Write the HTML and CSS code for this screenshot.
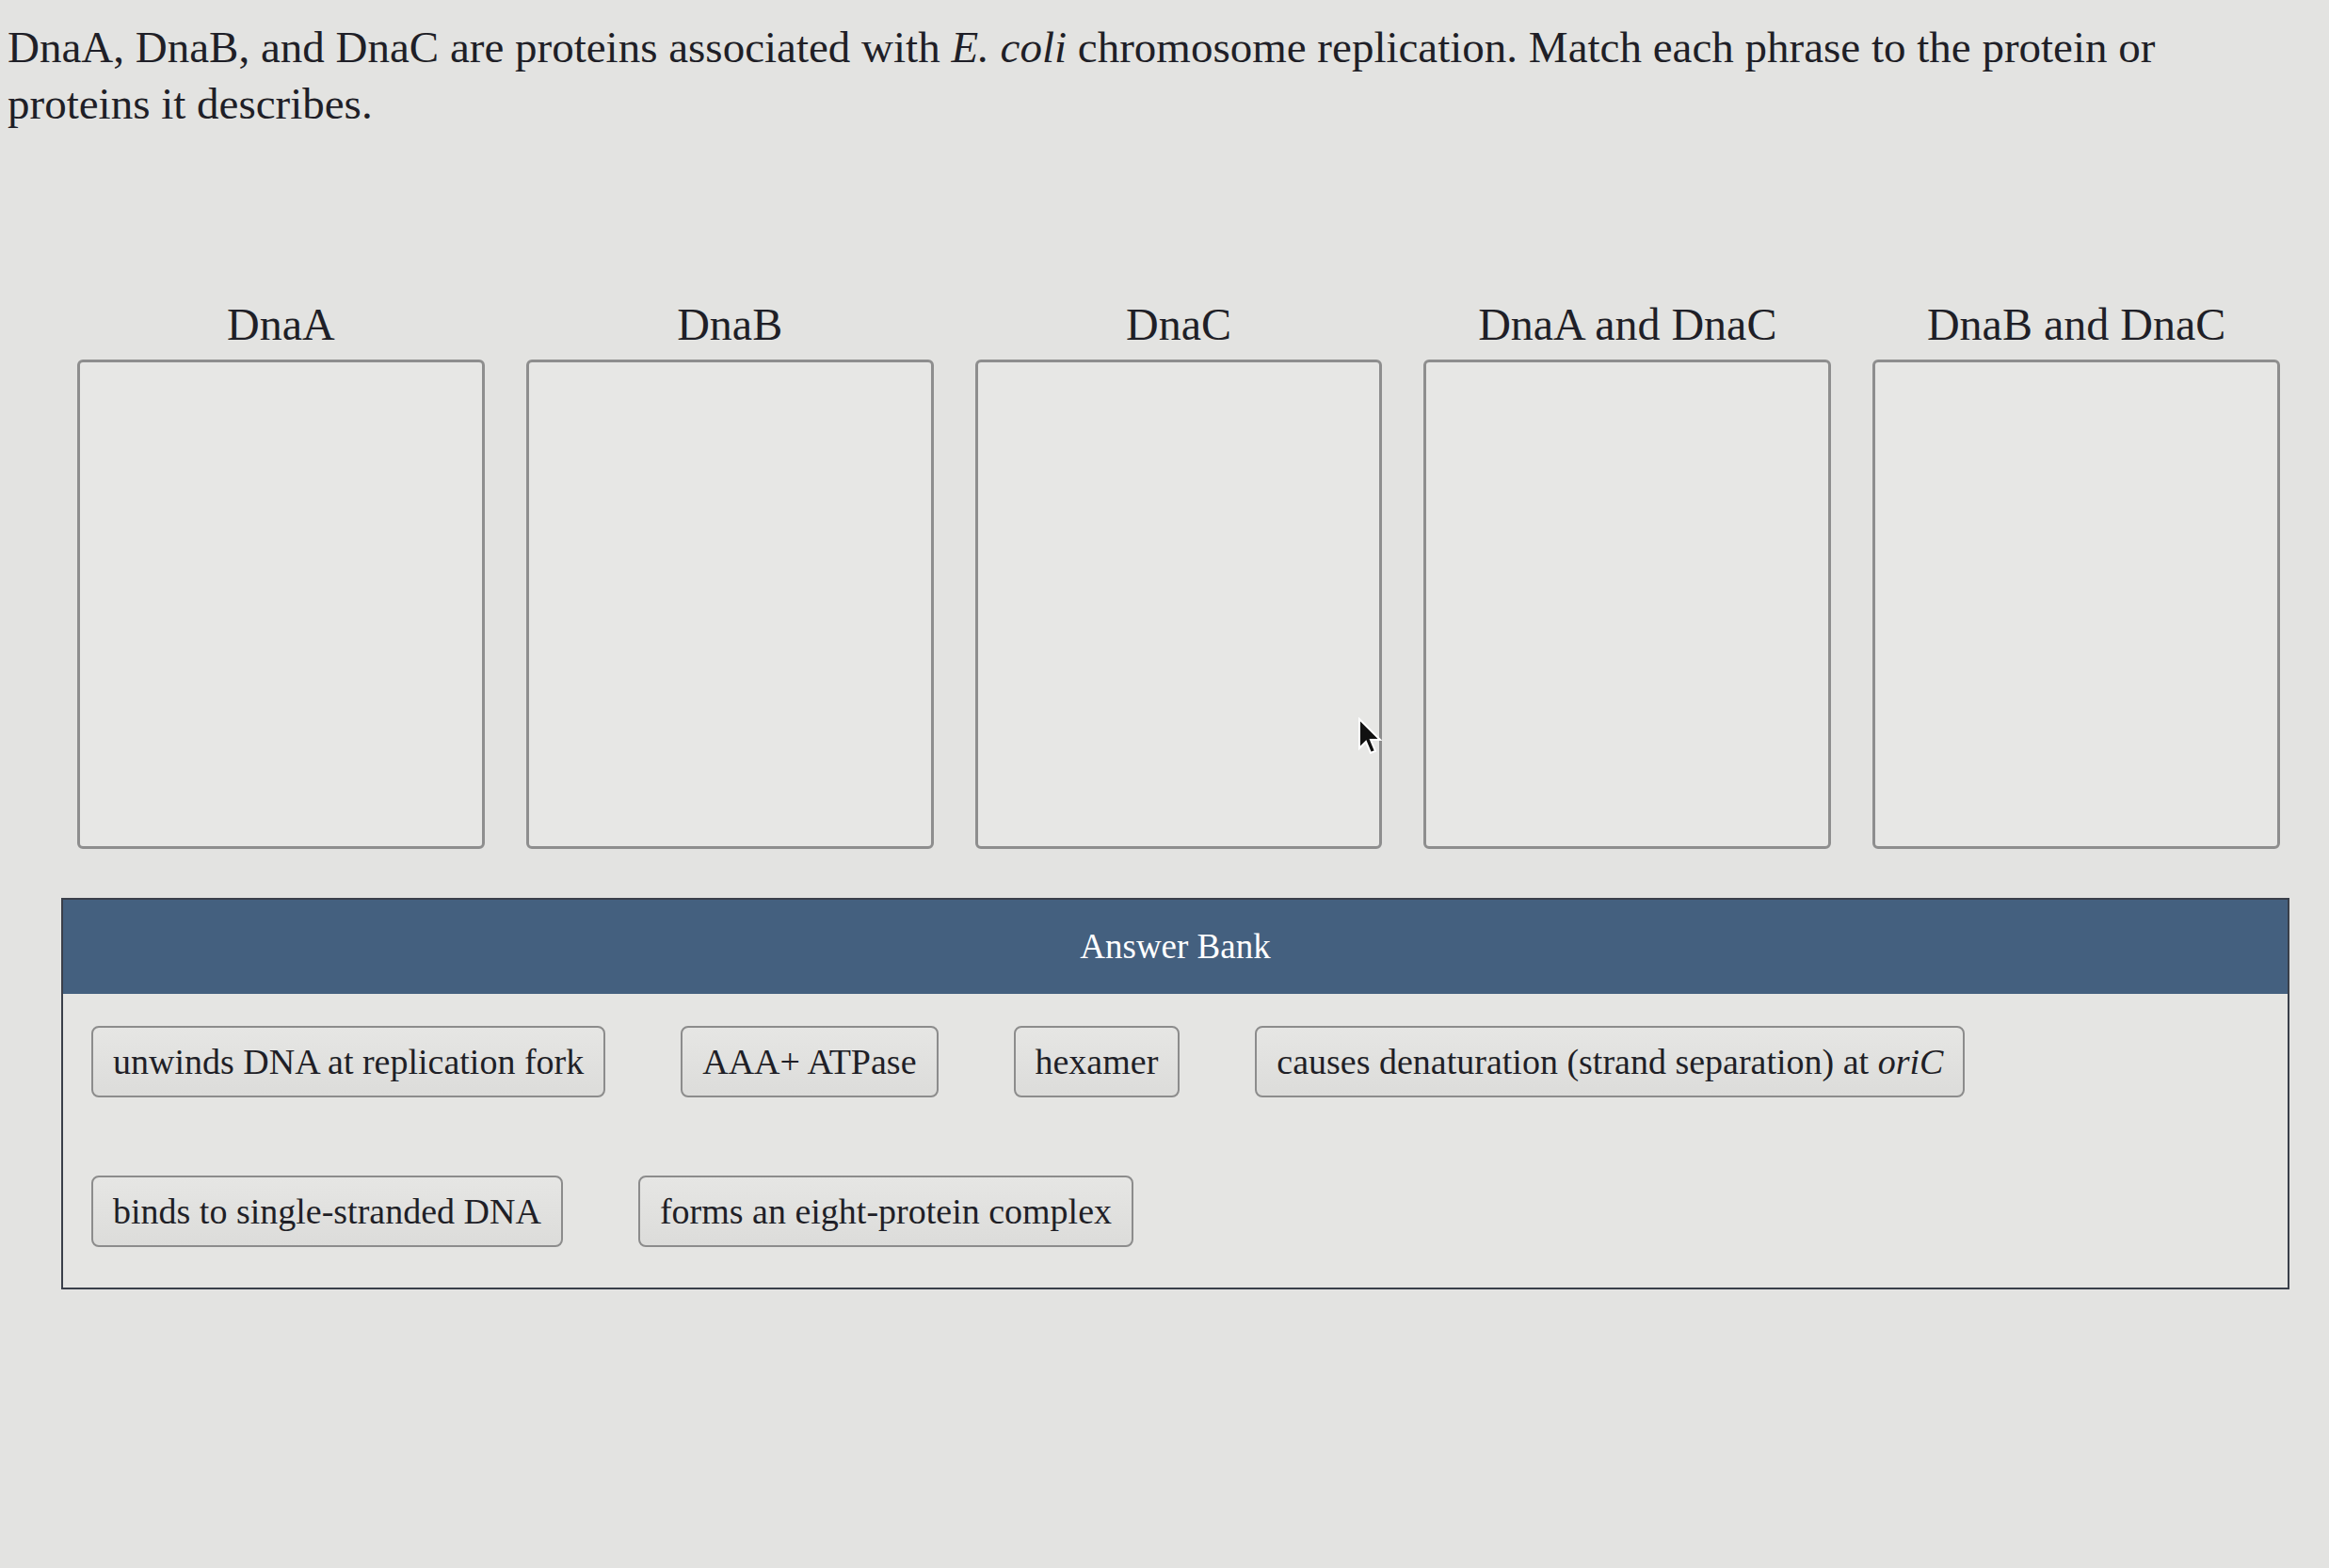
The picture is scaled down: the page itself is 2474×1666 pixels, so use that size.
FILE: index.html
```
<!DOCTYPE html>
<html lang="en">

<head>
    <meta charset="UTF-8">
    <title>Protein Matching</title>
    <link rel="stylesheet" href="styles.css">
</head>

<body>

    <p class="question">DnaA, DnaB, and DnaC are proteins associated with <i>E. coli</i> chromosome replication. Match each phrase to the protein or proteins it describes.</p>

    <div class="targets">
        <div class="target">
            <div class="label">DnaA</div>
            <div class="dropzone"></div>
        </div>
        <div class="target">
            <div class="label">DnaB</div>
            <div class="dropzone"></div>
        </div>
        <div class="target">
            <div class="label">DnaC</div>
            <div class="dropzone"></div>
        </div>
        <div class="target">
            <div class="label">DnaA and DnaC</div>
            <div class="dropzone"></div>
        </div>
        <div class="target">
            <div class="label">DnaB and DnaC</div>
            <div class="dropzone"></div>
        </div>
    </div>

    <div class="bank">
        <div class="bank-header">Answer Bank</div>
        <div class="bank-items">
            <div class="chip">unwinds DNA at replication fork</div>
            <div class="chip">AAA+ ATPase</div>
            <div class="chip">hexamer</div>
            <div class="chip">causes denaturation (strand separation) at <i>oriC</i></div>
            <div class="chip">binds to single-stranded DNA</div>
            <div class="chip">forms an eight-protein complex</div>
        </div>
    </div>

    <!-- mouse pointer -->
    <svg class="cursor" width="26" height="42" viewBox="0 0 13 21">
        <path d="M1 1 L1 16.5 L4.5 13 L7 19 L9.5 18 L7 12 L12 12 Z" fill="#111" stroke="#fff" stroke-width="1"/>
    </svg>

</body>

</html>
```

FILE: styles.css
```
body {
    margin: 0;
    padding: 0 0 0 8px;
    background: #e3e3e1;
    color: #1f1f27;
    font-family: 'Liberation Serif', 'Times New Roman', serif;
    position: relative;
    min-height: 1666px;
}

.question {
    margin: 20px 0 0 0;
    font-size: 47px;
    line-height: 60px;
    width: 2420px;
}

.targets {
    display: flex;
    gap: 44px;
    margin: 176px 0 0 74px;
    width: 2340px;
}

.target {
    flex: 1;
    display: flex;
    flex-direction: column;
    align-items: center;
}

.label {
    font-size: 48px;
    line-height: 58px;
    margin-bottom: 8px;
}

.dropzone {
    align-self: stretch;
    height: 514px;
    border: 3px solid #8e8e8e;
    border-radius: 6px;
    background: #e7e7e5;
}

.bank {
    margin: 52px 0 0 57px;
    width: 2363px;
    border: 2px solid #3a3f4a;
    background: #e5e5e3;
}

.bank-header {
    height: 100px;
    line-height: 100px;
    background: #44607f;
    color: #fff;
    text-align: center;
    font-size: 37px;
}

.bank-items {
    display: flex;
    flex-wrap: wrap;
    column-gap: 80px;
    row-gap: 83px;
    padding: 34px 30px 43px 30px;
}

.chip {
    height: 76px;
    line-height: 72px;
    padding: 0 21px;
    font-size: 38px;
    border: 2px solid #8c8c8c;
    border-radius: 8px;
    background: linear-gradient(#e6e6e4, #dcdcda);
    box-sizing: border-box;
}

.cursor {
    position: absolute;
    left: 1442px;
    top: 762px;
}
```
